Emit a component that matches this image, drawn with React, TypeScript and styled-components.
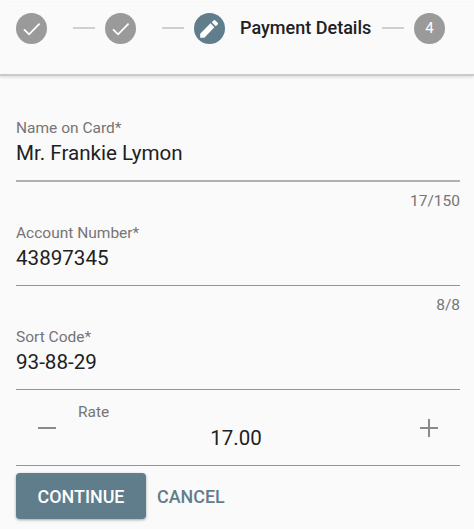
import styled, { createGlobalStyle } from "styled-components";

interface FieldProps {
  label: string;
  value: string;
  counter?: string;
  thick?: boolean;
}

const Field = ({ label, value, counter, thick }: FieldProps) => (
  <St.Field>
    <St.Label>{label}</St.Label>
    <St.Value $thick={thick}>{value}</St.Value>
    {counter && <St.Counter>{counter}</St.Counter>}
  </St.Field>
);

const CheckIcon = () => (
  <svg width="31" height="31" viewBox="0 0 31 31" fill="none">
    <path d="M8 16.3 13.1 21.3 23.6 10.6" stroke="#fff" strokeWidth="1.8" />
  </svg>
);

const PencilIcon = () => (
  <svg width="31" height="31" viewBox="0 0 31 31" fill="#fff">
    <path d="M6.2 20.7V24.700h4.100L20.400 14.300 16.500 10.300z" />
    <path d="m17.700 9.200 1.900-1.800a1.200 1.200 0 0 1 1.700 0L23.700 9.700a1.200 1.200 0 0 1 0 1.700L21.800 13.200z" />
  </svg>
);

export default function App() {
  return (
    <>
      <GlobalStyle />
      <St.Page>
        <St.Stepper>
          <St.Step>
            <CheckIcon />
          </St.Step>
          <St.Connector $before={26} $after={10} />
          <St.Step>
            <CheckIcon />
          </St.Step>
          <St.Connector $before={26} $after={10} />
          <St.Step $active>
            <PencilIcon />
          </St.Step>
          <St.StepTitle>Payment Details</St.StepTitle>
          <St.Connector $before={10} $after={10} />
          <St.Step>4</St.Step>
        </St.Stepper>

        <St.Form>
          <Field label="Name on Card*" value="Mr. Frankie Lymon" counter="17/150" thick />
          <Field label="Account Number*" value="43897345" counter="8/8" />
          <Field label="Sort Code*" value="93-88-29" />

          <St.RateRow>
            <St.IconButton aria-label="Decrease">
              <svg width="20" height="20" viewBox="0 0 20 20">
                <path d="M1 10H19" stroke="#8a8a8a" strokeWidth="2" />
              </svg>
            </St.IconButton>
            <St.Rate>
              <St.Label>Rate</St.Label>
              <St.RateValue>17.00</St.RateValue>
            </St.Rate>
            <St.IconButton aria-label="Increase">
              <svg width="20" height="20" viewBox="0 0 20 20">
                <path d="M1 10H19M10 1V19" stroke="#8a8a8a" strokeWidth="2" />
              </svg>
            </St.IconButton>
          </St.RateRow>

          <St.Actions>
            <St.Continue>CONTINUE</St.Continue>
            <St.Cancel>CANCEL</St.Cancel>
          </St.Actions>
        </St.Form>
      </St.Page>
    </>
  );
}

const GlobalStyle = createGlobalStyle`
  * {
    box-sizing: border-box;
  }

  body {
    margin: 0;
    background: #fff;
    font-family: Roboto, "Liberation Sans", sans-serif;
  }

  svg {
    display: block;
  }

  button {
    padding: 0;
    border: none;
    background: none;
    font: inherit;
  }
`;

const St = {
  Page: styled.main`
    height: 529px;
    border-top: 2px solid #fdfdfd;
    background: #fafafa;
  `,
  Stepper: styled.header`
    display: flex;
    align-items: center;
    height: 74px;
    padding: 0 0 20px 16px;
    border-bottom: 2px solid #cbcbcb;
    box-shadow: 0 1px 3px rgba(0, 0, 0, 0.14);
  `,
  Step: styled.span<{ $active?: boolean }>`
    display: flex;
    flex-shrink: 0;
    align-items: center;
    justify-content: center;
    width: 31px;
    height: 31px;
    border-radius: 50%;
    background: ${({ $active }) => ($active ? "#607d8b" : "#9a9a9a")};
    color: #fff;
    font-size: 15px;
  `,
  Connector: styled.span<{ $before: number; $after: number }>`
    flex-shrink: 0;
    width: 22px;
    height: 2px;
    margin: 0 ${({ $after }) => $after}px 0 ${({ $before }) => $before}px;
    background: #cfcfcf;
  `,
  StepTitle: styled.strong`
    width: 132px;
    margin-left: 15px;
    padding-bottom: 1px;
    color: #212121;
    font-size: 18.05px;
    font-weight: 500;
    white-space: nowrap;
  `,
  Form: styled.form`
    width: 460px;
    padding: 43px 0 0 16px;
  `,
  Field: styled.div`
    display: flex;
    flex-direction: column;
  `,
  Label: styled.label`
    height: 18px;
    color: #757575;
    font-size: 15.5px;
    line-height: 18px;
  `,
  Value: styled.div<{ $thick?: boolean }>`
    height: ${({ $thick }) => ($thick ? 45 : 44)}px;
    padding-top: 3px;
    border-bottom: ${({ $thick }) => ($thick ? 2 : 1)}px solid
      ${({ $thick }) => ($thick ? "#b0b0b0" : "#949494")};
    color: #212121;
    font-size: 20.6px;
    line-height: 26px;
  `,
  Counter: styled.span`
    height: 42px;
    padding-top: 10px;
    color: #757575;
    font-size: 15.5px;
    line-height: 18px;
    text-align: right;
  `,
  RateRow: styled.div`
    display: flex;
    height: 76px;
    border-bottom: 1px solid #949494;
  `,
  IconButton: styled.button`
    display: flex;
    align-items: flex-start;
    justify-content: center;
    width: 62px;
    padding-top: 28px;
  `,
  Rate: styled.div`
    display: flex;
    flex: 1;
    flex-direction: column;
    padding-top: 13px;
  `,
  RateValue: styled.span`
    padding: 4px 4px 0 0;
    color: #212121;
    font-size: 20.5px;
    line-height: 26px;
    text-align: center;
  `,
  Actions: styled.div`
    display: flex;
    gap: 11px;
    padding-top: 7px;
    font-size: 17.9px;
    font-weight: 500;
  `,
  Continue: styled.button`
    width: 130px;
    height: 46px;
    border-radius: 4px;
    background: #607d8b;
    box-shadow: 0 1px 3px rgba(0, 0, 0, 0.35);
    color: #fff;
  `,
  Cancel: styled.button`
    color: #607d8b;
  `,
};
